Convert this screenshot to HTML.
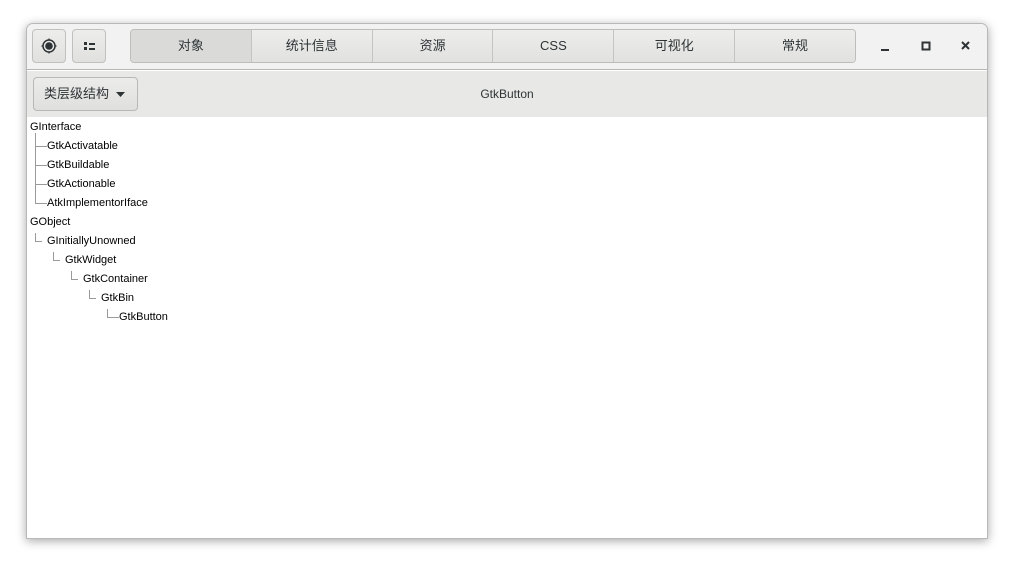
<!DOCTYPE html>
<html><head><meta charset="utf-8"><style>
*{margin:0;padding:0;box-sizing:border-box}
body{width:1014px;height:568px;background:#fff;position:relative;overflow:hidden;font-family:"Liberation Sans","Noto Sans CJK SC",sans-serif}
.win{position:absolute;left:26px;top:23px;width:962px;height:516px;border-radius:7px 7px 0 0;box-shadow:0 2px 10px rgba(0,0,0,.35);background:#fff;overflow:hidden;border:1px solid #b8b8b8}
.hdr{position:absolute;left:0;top:0;width:100%;height:46px;background:#f2f2f2;border-bottom:1px solid #b6b6b3}
.btn{position:absolute;top:5px;width:34px;height:34px;border:1px solid #c0c0bd;border-radius:4px;background:linear-gradient(#ededec,#e0e0de)}
.tabs{position:absolute;left:103px;top:5px;width:726px;height:34px;border:1px solid #bdbdba;border-radius:4px;display:flex;overflow:hidden}
.tab{flex:1;text-align:center;line-height:32px;font-size:13px;color:#2e3436;background:linear-gradient(#ededec,#e1e1df);border-left:1px solid #c4c4c1}
.tab:first-child{border-left:0;background:#dadad8}
.tb{position:absolute;left:0;top:47px;width:100%;height:46px;background:#e8e8e7}
.dd{position:absolute;left:6px;top:6px;width:105px;height:34px;border:1px solid #b8b8b5;border-radius:4px;background:linear-gradient(#ececeb,#dfdfdd);font-size:13px;color:#2e3436;line-height:32px;padding-left:10px}
.tree{position:absolute;left:0;top:94px;font-size:11px;color:#000}
.r{position:absolute;white-space:nowrap;line-height:19px;height:19px}
.l{position:absolute;border-left:1px solid #9a9a9a;}
.h{position:absolute;border-top:1px solid #9a9a9a;}
</style></head><body>
<div class="win">
<div class="hdr">
<div class="btn" style="left:5px"><svg width="32" height="32"><circle cx="16" cy="16" r="6" fill="none" stroke="#2e3436" stroke-width="1.5"/><circle cx="16" cy="16" r="3.8" fill="#2e3436"/><path d="M16 8.5v2M16 21.5v2M8.5 16h2M21.5 16h2" stroke="#2e3436" stroke-width="1.2"/></svg></div>
<div class="btn" style="left:45px"><svg width="32" height="32"><rect x="11" y="12" width="3" height="3" fill="#2e3436"/><rect x="11" y="17" width="3" height="3" fill="#2e3436"/><rect x="16" y="13" width="6" height="2" fill="#2e3436"/><rect x="16" y="18" width="6" height="2" fill="#2e3436"/></svg></div>
<div class="tabs"><div class="tab">对象</div><div class="tab">统计信息</div><div class="tab">资源</div><div class="tab">CSS</div><div class="tab">可视化</div><div class="tab">常规</div></div>
<svg style="position:absolute;left:850px;top:12px" width="110" height="24"><rect x="4" y="13" width="8" height="2" fill="#2e3436"/><rect x="45.5" y="6.5" width="7" height="7" fill="none" stroke="#2e3436" stroke-width="2"/><path d="M85 6l7 7M92 6l-7 7" stroke="#2e3436" stroke-width="2"/></svg>
</div>
<div class="tb"><div class="dd">类层级结构 <svg width="12" height="8" style="margin-left:2px"><path d="M1 2h9l-4.5 5z" fill="#2e3436"/></svg></div>
<div style="position:absolute;left:0;width:100%;text-align:center;top:0;line-height:46px;font-size:12px;color:#2e3436">GtkButton</div></div>
<div class="tree">
<div class="r" style="left:3px;top:0">GInterface</div>
<div class="l" style="left:8px;top:15px;height:71px"></div>
<div class="h" style="left:8px;top:28px;width:12px"></div><div class="r" style="left:20px;top:19px">GtkActivatable</div>
<div class="h" style="left:8px;top:47px;width:12px"></div><div class="r" style="left:20px;top:38px">GtkBuildable</div>
<div class="h" style="left:8px;top:66px;width:12px"></div><div class="r" style="left:20px;top:57px">GtkActionable</div>
<div class="h" style="left:8px;top:85px;width:12px"></div><div class="r" style="left:20px;top:76px">AtkImplementorIface</div>
<div class="r" style="left:3px;top:95px">GObject</div>
<div class="l" style="left:8px;top:115px;height:8px"></div><div class="h" style="left:8px;top:123px;width:7px"></div><div class="r" style="left:20px;top:114px">GInitiallyUnowned</div>
<div class="l" style="left:26px;top:134px;height:8px"></div><div class="h" style="left:26px;top:142px;width:7px"></div><div class="r" style="left:38px;top:133px">GtkWidget</div>
<div class="l" style="left:44px;top:153px;height:8px"></div><div class="h" style="left:44px;top:161px;width:7px"></div><div class="r" style="left:56px;top:152px">GtkContainer</div>
<div class="l" style="left:62px;top:172px;height:8px"></div><div class="h" style="left:62px;top:180px;width:7px"></div><div class="r" style="left:74px;top:171px">GtkBin</div>
<div class="l" style="left:80px;top:191px;height:8px"></div><div class="h" style="left:80px;top:199px;width:12px"></div><div class="r" style="left:92px;top:190px">GtkButton</div>
</div>
</div>
</body></html>
